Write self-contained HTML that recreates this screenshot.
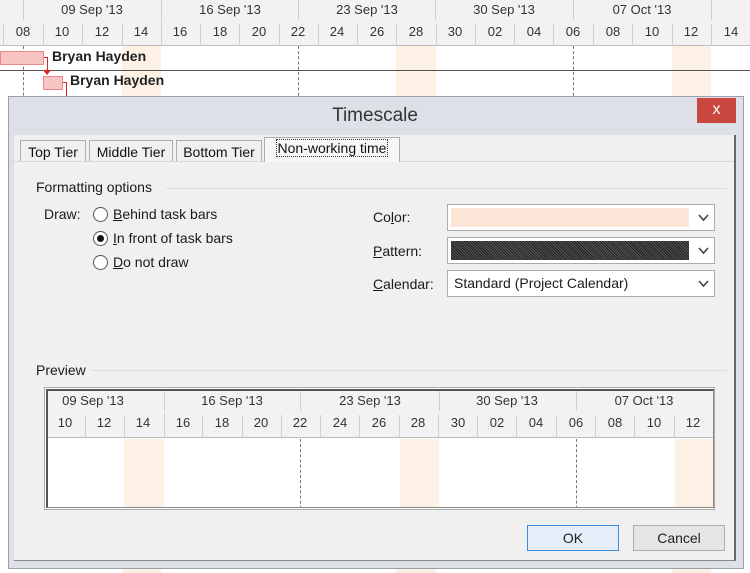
<!DOCTYPE html>
<html><head><meta charset="utf-8"><style>
*{margin:0;padding:0;box-sizing:border-box}
body{width:750px;height:573px;overflow:hidden;background:#fff;font-family:"Liberation Sans",Arial,sans-serif;position:relative;color:#222}
.a{position:absolute}
.hl{position:absolute;width:40px;text-align:center;font-size:13px;color:#333}
.tk{position:absolute;width:1px;background:#cfcfcf}
.wl{position:absolute;width:120px;text-align:center;font-size:13px;color:#333}
.shade{position:absolute;background:#fdf0e5}
.dot{position:absolute;width:0;border-left:1px dashed #777}
.lbl{position:absolute;font-size:14px;color:#1a1a1a}
.combo{position:absolute;left:447px;width:268px;height:27px;border:1px solid #acacac;background:#fff}
.chev{position:absolute;right:5px;top:8px;width:11px;height:9px}
.radio{position:absolute;width:15px;height:15px;border-radius:50%;border:1px solid #555;background:#fff}
.tab{position:absolute;top:140px;height:22px;border:1px solid #acacac;border-bottom:none;background:#f0f0f0;font-size:14px;padding:3px 0 0 0;text-align:center;color:#111}
.btn{position:absolute;width:92px;height:26px;border:1px solid #acacac;background:#e5e5e5;font-size:14px;text-align:center;line-height:24px}
</style></head><body>
<div class="a" style="left:0;top:0;width:750px;height:46px;background:#f2f2f2;border-bottom:1px solid #bdbdbd"></div>
<div class="shade" style="left:122px;top:46px;width:39px;height:527px"></div>
<div class="shade" style="left:396px;top:46px;width:40px;height:527px"></div>
<div class="shade" style="left:672px;top:46px;width:39px;height:527px"></div>
<div class="dot" style="left:23px;top:46px;height:60px"></div>
<div class="dot" style="left:298px;top:46px;height:60px"></div>
<div class="dot" style="left:573px;top:46px;height:60px"></div>
<div class="a" style="left:0;top:70px;width:750px;height:1px;background:#555"></div>
<div class="tk" style="left:23px;top:0;height:20px"></div><div class="tk" style="left:161px;top:0;height:20px"></div><div class="tk" style="left:298px;top:0;height:20px"></div><div class="tk" style="left:435px;top:0;height:20px"></div><div class="tk" style="left:573px;top:0;height:20px"></div><div class="tk" style="left:711px;top:0;height:20px"></div>
<div class="wl" style="left:32px;top:2px">09 Sep '13</div>
<div class="wl" style="left:170px;top:2px">16 Sep '13</div>
<div class="wl" style="left:307px;top:2px">23 Sep '13</div>
<div class="wl" style="left:444px;top:2px">30 Sep '13</div>
<div class="wl" style="left:582px;top:2px">07 Oct '13</div>
<div class="tk" style="left:3px;top:24px;height:22px"></div><div class="tk" style="left:43px;top:24px;height:22px"></div><div class="tk" style="left:82px;top:24px;height:22px"></div><div class="tk" style="left:122px;top:24px;height:22px"></div><div class="tk" style="left:161px;top:21px;height:25px"></div><div class="tk" style="left:200px;top:24px;height:22px"></div><div class="tk" style="left:239px;top:24px;height:22px"></div><div class="tk" style="left:279px;top:24px;height:22px"></div><div class="tk" style="left:318px;top:24px;height:22px"></div><div class="tk" style="left:357px;top:24px;height:22px"></div><div class="tk" style="left:396px;top:24px;height:22px"></div><div class="tk" style="left:436px;top:24px;height:22px"></div><div class="tk" style="left:475px;top:24px;height:22px"></div><div class="tk" style="left:514px;top:24px;height:22px"></div><div class="tk" style="left:553px;top:24px;height:22px"></div><div class="tk" style="left:593px;top:24px;height:22px"></div><div class="tk" style="left:632px;top:24px;height:22px"></div><div class="tk" style="left:672px;top:24px;height:22px"></div><div class="tk" style="left:711px;top:24px;height:22px"></div>
<div class="hl" style="left:3px;top:24px">08</div><div class="hl" style="left:42px;top:24px">10</div><div class="hl" style="left:82px;top:24px">12</div><div class="hl" style="left:121px;top:24px">14</div><div class="hl" style="left:160px;top:24px">16</div><div class="hl" style="left:200px;top:24px">18</div><div class="hl" style="left:239px;top:24px">20</div><div class="hl" style="left:278px;top:24px">22</div><div class="hl" style="left:317px;top:24px">24</div><div class="hl" style="left:357px;top:24px">26</div><div class="hl" style="left:396px;top:24px">28</div><div class="hl" style="left:435px;top:24px">30</div><div class="hl" style="left:475px;top:24px">02</div><div class="hl" style="left:514px;top:24px">04</div><div class="hl" style="left:553px;top:24px">06</div><div class="hl" style="left:593px;top:24px">08</div><div class="hl" style="left:632px;top:24px">10</div><div class="hl" style="left:671px;top:24px">12</div><div class="hl" style="left:711px;top:24px">14</div>
<div class="a" style="left:0;top:51px;width:44px;height:14px;background:#f7c4c4;border:1px solid #e88"></div>
<div class="a" style="left:44px;top:57px;width:4px;height:1px;background:#d22"></div>
<div class="a" style="left:47px;top:57px;width:1px;height:15px;background:#d22"></div>
<div class="a" style="left:43px;top:70px;border:4px solid transparent;border-top:5px solid #d22"></div>
<div class="a" style="left:52px;top:48px;font-size:14px;font-weight:bold">Bryan Hayden</div>
<div class="a" style="left:43px;top:76px;width:20px;height:14px;background:#f7c4c4;border:1px solid #e88"></div>
<div class="a" style="left:63px;top:82px;width:4px;height:1px;background:#d22"></div>
<div class="a" style="left:66px;top:82px;width:1px;height:15px;background:#d22"></div>
<div class="a" style="left:70px;top:72px;font-size:14px;font-weight:bold">Bryan Hayden</div>
<div class="a" style="left:8px;top:96px;width:736px;height:473px;background:#dde1e7;border:1px solid #9aa0a8"></div>
<div class="a" style="left:0;top:105px;width:750px;text-align:center;font-size:19px;color:#333">Timescale</div>
<div class="a" style="left:697px;top:98px;width:39px;height:25px;background:#c9473f;color:#fff;font-size:16px;text-align:center;line-height:23px">x</div>
<div class="a" style="left:14px;top:135px;width:722px;height:426px;background:#f0f0f0;border-right:2px solid #666;border-bottom:1px solid #888"></div>
<div class="tab" style="left:20px;width:66px">Top Tier</div>
<div class="tab" style="left:89px;width:84px">Middle Tier</div>
<div class="tab" style="left:176px;width:86px">Bottom Tier</div>
<div class="a" style="left:14px;top:161px;width:720px;height:1px;background:#d8d8d8"></div>
<div class="tab" style="left:264px;top:137px;height:25px;width:136px;background:#f7f7f7;padding-top:2px"><span style="border:1px dotted #333;padding:0 1px">Non-working time</span></div>
<div class="lbl" style="left:36px;top:179px">Formatting options</div>
<div class="a" style="left:166px;top:188px;width:561px;height:1px;background:#ddd"></div>
<div class="lbl" style="left:44px;top:206px">Draw:</div>
<div class="radio" style="left:93px;top:207px"></div>
<div class="radio" style="left:93px;top:231px"><div class="a" style="left:3px;top:3px;width:7px;height:7px;border-radius:50%;background:#111"></div></div>
<div class="radio" style="left:93px;top:255px"></div>
<div class="lbl" style="left:113px;top:206px"><u>B</u>ehind task bars</div>
<div class="lbl" style="left:113px;top:230px"><u>I</u>n front of task bars</div>
<div class="lbl" style="left:113px;top:254px"><u>D</u>o not draw</div>
<div class="lbl" style="left:373px;top:209px">Co<u>l</u>or:</div>
<div class="lbl" style="left:373px;top:243px"><u>P</u>attern:</div>
<div class="lbl" style="left:373px;top:276px"><u>C</u>alendar:</div>
<div class="combo" style="top:204px"><div class="a" style="left:3px;top:3px;width:238px;height:19px;background:#fde6d8"></div><svg class="chev" viewBox="0 0 11 9"><path d="M1 2L5.5 7L10 2" stroke="#444" stroke-width="1.6" fill="none"/></svg></div>
<div class="combo" style="top:237px"><div class="a" style="left:3px;top:3px;width:238px;height:19px;background:#555;background-image:repeating-linear-gradient(45deg,#222 0 1px,transparent 1px 2px)"></div><svg class="chev" viewBox="0 0 11 9"><path d="M1 2L5.5 7L10 2" stroke="#444" stroke-width="1.6" fill="none"/></svg></div>
<div class="combo" style="top:270px"><div class="lbl" style="left:6px;top:4px">Standard (Project Calendar)</div><svg class="chev" viewBox="0 0 11 9"><path d="M1 2L5.5 7L10 2" stroke="#444" stroke-width="1.6" fill="none"/></svg></div>
<div class="lbl" style="left:36px;top:362px">Preview</div>
<div class="a" style="left:91px;top:370px;width:636px;height:1px;background:#ddd"></div>
<div class="a" style="left:44px;top:387px;width:671px;height:123px;border:1px solid #aaa;background:#fff"></div>
<div class="a" style="left:46px;top:389px;width:668px;height:119px;border:2px solid #555;border-right:1px solid #888;border-bottom:1px solid #888;background:#fff;overflow:hidden">
 <div class="a" style="left:0;top:0;width:670px;height:47px;background:#f2f2f2;border-bottom:1px solid #bbb"></div>
 <div class="shade" style="left:76px;top:48px;width:40px;height:80px"></div>
 <div class="shade" style="left:352px;top:48px;width:39px;height:80px"></div>
 <div class="shade" style="left:627px;top:48px;width:40px;height:80px"></div>
 <div class="dot" style="left:252px;top:48px;height:80px"></div>
 <div class="dot" style="left:528px;top:48px;height:80px"></div>
</div>
<div class="tk" style="left:164px;top:391px;height:20px"></div><div class="tk" style="left:300px;top:391px;height:20px"></div><div class="tk" style="left:439px;top:391px;height:20px"></div><div class="tk" style="left:576px;top:391px;height:20px"></div>
<div class="wl" style="left:33px;top:393px">09 Sep '13</div>
<div class="wl" style="left:172px;top:393px">16 Sep '13</div>
<div class="wl" style="left:310px;top:393px">23 Sep '13</div>
<div class="wl" style="left:447px;top:393px">30 Sep '13</div>
<div class="wl" style="left:584px;top:393px">07 Oct '13</div>
<div class="tk" style="left:85px;top:415px;height:22px"></div><div class="tk" style="left:124px;top:415px;height:22px"></div><div class="tk" style="left:164px;top:413px;height:24px"></div><div class="tk" style="left:202px;top:415px;height:22px"></div><div class="tk" style="left:242px;top:415px;height:22px"></div><div class="tk" style="left:281px;top:415px;height:22px"></div><div class="tk" style="left:320px;top:415px;height:22px"></div><div class="tk" style="left:359px;top:415px;height:22px"></div><div class="tk" style="left:399px;top:415px;height:22px"></div><div class="tk" style="left:438px;top:415px;height:22px"></div><div class="tk" style="left:477px;top:415px;height:22px"></div><div class="tk" style="left:516px;top:415px;height:22px"></div><div class="tk" style="left:556px;top:415px;height:22px"></div><div class="tk" style="left:595px;top:415px;height:22px"></div><div class="tk" style="left:634px;top:415px;height:22px"></div><div class="tk" style="left:674px;top:415px;height:22px"></div>
<div class="hl" style="left:45px;top:415px">10</div><div class="hl" style="left:84px;top:415px">12</div><div class="hl" style="left:123px;top:415px">14</div><div class="hl" style="left:163px;top:415px">16</div><div class="hl" style="left:202px;top:415px">18</div><div class="hl" style="left:241px;top:415px">20</div><div class="hl" style="left:280px;top:415px">22</div><div class="hl" style="left:320px;top:415px">24</div><div class="hl" style="left:359px;top:415px">26</div><div class="hl" style="left:398px;top:415px">28</div><div class="hl" style="left:438px;top:415px">30</div><div class="hl" style="left:477px;top:415px">02</div><div class="hl" style="left:516px;top:415px">04</div><div class="hl" style="left:556px;top:415px">06</div><div class="hl" style="left:595px;top:415px">08</div><div class="hl" style="left:634px;top:415px">10</div><div class="hl" style="left:673px;top:415px">12</div>
<div class="btn" style="left:527px;top:525px;border:1px solid #3c8fd8;background:#e5eef8">OK</div>
<div class="btn" style="left:633px;top:525px">Cancel</div>
</body></html>
